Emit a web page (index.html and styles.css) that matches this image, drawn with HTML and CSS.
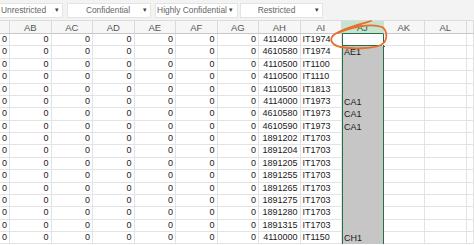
FILE: index.html
```html
<!DOCTYPE html>
<html>
<head>
<meta charset="utf-8">
<link rel="stylesheet" href="styles.css">
</head>
<body>
<div class="page">
  <div class="toolbar">
    <div class="combo c1"><span class="label">Unrestricted</span><span class="arrow">▾</span></div>
    <div class="combo c2"><span class="label">Confidential</span><span class="arrow">▾</span></div>
    <div class="combo c3"><span class="label">Highly Confidential</span><span class="arrow tight">▾</span></div>
    <div class="combo c4"><span class="label">Restricted</span><span class="arrow">▾</span></div>
  </div>
  <div class="sheet">
    <div class="row head">
      <div class="cell"></div><div class="cell">AB</div><div class="cell">AC</div><div class="cell">AD</div><div class="cell">AE</div><div class="cell">AF</div><div class="cell">AG</div><div class="cell">AH</div><div class="cell">AI</div><div class="cell hsel">AJ</div><div class="cell">AK</div><div class="cell">AL</div><div class="cell"></div>
    </div>
    <div class="row"><div class="cell n">0</div><div class="cell n">0</div><div class="cell n">0</div><div class="cell n">0</div><div class="cell n">0</div><div class="cell n">0</div><div class="cell n">0</div><div class="cell n">4114000</div><div class="cell t">IT1974</div><div class="cell t sel active"><span class="handle"></span></div><div class="cell"></div><div class="cell"></div><div class="cell"></div></div>
    <div class="row"><div class="cell n">0</div><div class="cell n">0</div><div class="cell n">0</div><div class="cell n">0</div><div class="cell n">0</div><div class="cell n">0</div><div class="cell n">0</div><div class="cell n">4610580</div><div class="cell t">IT1974</div><div class="cell t sel">AE1</div><div class="cell"></div><div class="cell"></div><div class="cell"></div></div>
    <div class="row"><div class="cell n">0</div><div class="cell n">0</div><div class="cell n">0</div><div class="cell n">0</div><div class="cell n">0</div><div class="cell n">0</div><div class="cell n">0</div><div class="cell n">4110500</div><div class="cell t">IT1100</div><div class="cell t sel"></div><div class="cell"></div><div class="cell"></div><div class="cell"></div></div>
    <div class="row"><div class="cell n">0</div><div class="cell n">0</div><div class="cell n">0</div><div class="cell n">0</div><div class="cell n">0</div><div class="cell n">0</div><div class="cell n">0</div><div class="cell n">4110500</div><div class="cell t">IT1110</div><div class="cell t sel"></div><div class="cell"></div><div class="cell"></div><div class="cell"></div></div>
    <div class="row"><div class="cell n">0</div><div class="cell n">0</div><div class="cell n">0</div><div class="cell n">0</div><div class="cell n">0</div><div class="cell n">0</div><div class="cell n">0</div><div class="cell n">4110500</div><div class="cell t">IT1813</div><div class="cell t sel"></div><div class="cell"></div><div class="cell"></div><div class="cell"></div></div>
    <div class="row"><div class="cell n">0</div><div class="cell n">0</div><div class="cell n">0</div><div class="cell n">0</div><div class="cell n">0</div><div class="cell n">0</div><div class="cell n">0</div><div class="cell n">4114000</div><div class="cell t">IT1973</div><div class="cell t sel">CA1</div><div class="cell"></div><div class="cell"></div><div class="cell"></div></div>
    <div class="row"><div class="cell n">0</div><div class="cell n">0</div><div class="cell n">0</div><div class="cell n">0</div><div class="cell n">0</div><div class="cell n">0</div><div class="cell n">0</div><div class="cell n">4610580</div><div class="cell t">IT1973</div><div class="cell t sel">CA1</div><div class="cell"></div><div class="cell"></div><div class="cell"></div></div>
    <div class="row"><div class="cell n">0</div><div class="cell n">0</div><div class="cell n">0</div><div class="cell n">0</div><div class="cell n">0</div><div class="cell n">0</div><div class="cell n">0</div><div class="cell n">4610590</div><div class="cell t">IT1973</div><div class="cell t sel">CA1</div><div class="cell"></div><div class="cell"></div><div class="cell"></div></div>
    <div class="row"><div class="cell n">0</div><div class="cell n">0</div><div class="cell n">0</div><div class="cell n">0</div><div class="cell n">0</div><div class="cell n">0</div><div class="cell n">0</div><div class="cell n">1891202</div><div class="cell t">IT1703</div><div class="cell t sel"></div><div class="cell"></div><div class="cell"></div><div class="cell"></div></div>
    <div class="row"><div class="cell n">0</div><div class="cell n">0</div><div class="cell n">0</div><div class="cell n">0</div><div class="cell n">0</div><div class="cell n">0</div><div class="cell n">0</div><div class="cell n">1891204</div><div class="cell t">IT1703</div><div class="cell t sel"></div><div class="cell"></div><div class="cell"></div><div class="cell"></div></div>
    <div class="row"><div class="cell n">0</div><div class="cell n">0</div><div class="cell n">0</div><div class="cell n">0</div><div class="cell n">0</div><div class="cell n">0</div><div class="cell n">0</div><div class="cell n">1891205</div><div class="cell t">IT1703</div><div class="cell t sel"></div><div class="cell"></div><div class="cell"></div><div class="cell"></div></div>
    <div class="row"><div class="cell n">0</div><div class="cell n">0</div><div class="cell n">0</div><div class="cell n">0</div><div class="cell n">0</div><div class="cell n">0</div><div class="cell n">0</div><div class="cell n">1891255</div><div class="cell t">IT1703</div><div class="cell t sel"></div><div class="cell"></div><div class="cell"></div><div class="cell"></div></div>
    <div class="row"><div class="cell n">0</div><div class="cell n">0</div><div class="cell n">0</div><div class="cell n">0</div><div class="cell n">0</div><div class="cell n">0</div><div class="cell n">0</div><div class="cell n">1891265</div><div class="cell t">IT1703</div><div class="cell t sel"></div><div class="cell"></div><div class="cell"></div><div class="cell"></div></div>
    <div class="row"><div class="cell n">0</div><div class="cell n">0</div><div class="cell n">0</div><div class="cell n">0</div><div class="cell n">0</div><div class="cell n">0</div><div class="cell n">0</div><div class="cell n">1891275</div><div class="cell t">IT1703</div><div class="cell t sel"></div><div class="cell"></div><div class="cell"></div><div class="cell"></div></div>
    <div class="row"><div class="cell n">0</div><div class="cell n">0</div><div class="cell n">0</div><div class="cell n">0</div><div class="cell n">0</div><div class="cell n">0</div><div class="cell n">0</div><div class="cell n">1891280</div><div class="cell t">IT1703</div><div class="cell t sel"></div><div class="cell"></div><div class="cell"></div><div class="cell"></div></div>
    <div class="row"><div class="cell n">0</div><div class="cell n">0</div><div class="cell n">0</div><div class="cell n">0</div><div class="cell n">0</div><div class="cell n">0</div><div class="cell n">0</div><div class="cell n">1891315</div><div class="cell t">IT1703</div><div class="cell t sel"></div><div class="cell"></div><div class="cell"></div><div class="cell"></div></div>
    <div class="row"><div class="cell n">0</div><div class="cell n">0</div><div class="cell n">0</div><div class="cell n">0</div><div class="cell n">0</div><div class="cell n">0</div><div class="cell n">0</div><div class="cell n">4110000</div><div class="cell t">IT1150</div><div class="cell t sel">CH1</div><div class="cell"></div><div class="cell"></div><div class="cell"></div></div>
  </div>
  <svg class="scribble" width="474" height="245" viewBox="0 0 474 245">
    <path d="M338 33 C350 27 371 23 382 27 C388 31 388 41 381 45 C372 49 352 49 340 47 C330 44 329 38 335 34 C344 28 360 24 371 21" fill="none" stroke="#e8702a" stroke-width="1.8" stroke-linecap="round"/>
  </svg>
</div>
</body>
</html>
```
FILE: styles.css
```css
html, body {
  margin: 0;
  padding: 0;
  background: #ffffff;
  overflow: hidden;
}
.page {
  position: relative;
  width: 474px;
  height: 245px;
  overflow: hidden;
  font-family: "Liberation Sans", Arial, sans-serif;
}
.toolbar {
  height: 20px;
  display: flex;
  align-items: center;
  background: #f3f3f3;
  box-sizing: border-box;
}
.combo {
  height: 15px;
  background: #ffffff;
  border: 1px solid #e4e4e4;
  box-sizing: border-box;
  display: flex;
  align-items: center;
  color: #666666;
  font-size: 8.4px;
  margin-right: 4px;
}
.combo .label {
  flex: 1;
  text-align: center;
  white-space: nowrap;
}
.combo .arrow {
  font-size: 7px;
  color: #444;
  width: 10px;
  text-align: center;
}
.c1 { width: 63px; border-left: none; }
.c1 .label { text-align: left; padding-left: 1px; }
.c2 { width: 84px; }
.c2 .label { padding-left: 8px; }
.c3 { width: 83px; justify-content: center; margin-right: 2px; }
.c3 .label { flex: none; }
.c3 .arrow.tight { width: 9px; }
.c4 { width: 83px; }
.sheet {
  display: flex;
  flex-direction: column;
}
.row {
  display: grid;
  grid-template-columns: 10px repeat(11, 41.5px) 1fr;
  height: 12.375px;
}
.row.head {
  height: 14px;
  background: #f6f6f6;
  border-top: 1px solid #dcdcdc;
  box-sizing: border-box;
}
.cell {
  box-sizing: border-box;
  border-right: 1px solid #e3e3e3;
  border-bottom: 1px solid #e3e3e3;
  font-size: 9px;
  line-height: 11.8px;
  color: #1a1a1a;
  white-space: nowrap;
  overflow: hidden;
  position: relative;
}
.head .cell {
  text-align: center;
  color: #555555;
  font-size: 9.5px;
  line-height: 13px;
  border-right: 1px solid #dadada;
  border-bottom: 1px solid #c8c8c8;
}
.head .cell.hsel {
  background: #c6e4d0;
  color: #2a6a44;
  border-bottom: 1px solid #217346;
}
.cell.n {
  text-align: right;
  padding-right: 2px;
}
.cell.t {
  text-align: left;
  padding-left: 2px;
}
.cell.sel {
  background: #c6c6c6;
  border: none;
  line-height: 12.375px;
  box-shadow: inset 1px 0 0 #217346, inset -1px 0 0 #217346;
}
.cell.sel.active {
  background: #ffffff;
  box-shadow: inset 1px 0 0 #217346, inset -1px 0 0 #217346, inset 0 -1px 0 #217346;
  overflow: visible;
}
.handle {
  position: absolute;
  right: -2px;
  bottom: -2px;
  width: 4px;
  height: 4px;
  background: #217346;
  border: 1px solid #ffffff;
  box-sizing: border-box;
}
.scribble {
  position: absolute;
  left: 0;
  top: 0;
  pointer-events: none;
}
```
